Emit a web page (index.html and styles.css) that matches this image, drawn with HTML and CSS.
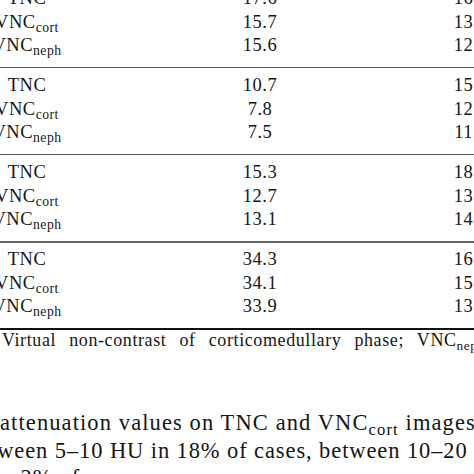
FILE: index.html
```html
<!DOCTYPE html>
<html>
<head>
<meta charset="utf-8">
<link rel="stylesheet" href="styles.css">
</head>
<body>
<div class="table">
  <div class="group">
    <div class="row"><span>TNC</span><span>17.6</span><span>16.4</span></div>
    <div class="row"><span>VNC<span class="sub">cort</span></span><span>15.7</span><span>13.9</span></div>
    <div class="row"><span>VNC<span class="sub">neph</span></span><span>15.6</span><span>12.8</span></div>
  </div>
  <div class="group">
    <div class="row"><span>TNC</span><span>10.7</span><span>15.2</span></div>
    <div class="row"><span>VNC<span class="sub">cort</span></span><span>7.8</span><span>12.6</span></div>
    <div class="row"><span>VNC<span class="sub">neph</span></span><span>7.5</span><span>11.9</span></div>
  </div>
  <div class="group">
    <div class="row"><span>TNC</span><span>15.3</span><span>18.1</span></div>
    <div class="row"><span>VNC<span class="sub">cort</span></span><span>12.7</span><span>13.8</span></div>
    <div class="row"><span>VNC<span class="sub">neph</span></span><span>13.1</span><span>14.5</span></div>
  </div>
  <div class="group group-thick">
    <div class="row"><span>TNC</span><span>34.3</span><span>16.7</span></div>
    <div class="row"><span>VNC<span class="sub">cort</span></span><span>34.1</span><span>15.3</span></div>
    <div class="row"><span>VNC<span class="sub">neph</span></span><span>33.9</span><span>13.6</span></div>
  </div>
</div>
<p class="footnote">Virtual non-contrast of corticomedullary phase; VNC<span class="sub">neph</span>, virtual</p>
<div class="body-text">
  <p class="line l1">attenuation values on TNC and VNC<span class="sub">cort</span> images were</p>
  <p class="line l2">between 5–10 HU in 18% of cases, between 10–20 HU in</p>
  <p class="line l3">in 2% of cases.</p>
</div>
</body>
</html>
```

FILE: styles.css
```css
html, body {
  margin: 0;
  padding: 0;
  background: #ffffff;
}
body {
  width: 474px;
  height: 474px;
  overflow: hidden;
  color: #151515;
  font-family: "Liberation Serif", "Times New Roman", serif;
}
.table {
  margin-left: -20px;
  margin-top: -20px;
  width: 516px;
  border-bottom: 2px solid #111;
}
.group {
  border-top: 1px solid #5a5a5a;
  padding: 6px 0 9.5px;
}
.group-thick {
  border-top: 2px solid #666;
  padding-top: 5px;
}
.row {
  display: grid;
  grid-template-columns: 94px 372px 50px;
  height: 23.5px;
  line-height: 23.5px;
  font-size: 18.5px;
  letter-spacing: 0.5px;
  white-space: nowrap;
}
.row > span {
  text-align: center;
}
.sub {
  font-size: 0.74em;
  vertical-align: -0.28em;
  line-height: 0;
}
.footnote {
  margin: 0 0 0 2px;
  font-size: 18px;
  line-height: 20px;
  letter-spacing: 0.6px;
  word-spacing: 8px;
  white-space: nowrap;
}
.body-text {
  margin-top: 59px;
  font-size: 22.5px;
  line-height: 27.5px;
  letter-spacing: 1.1px;
  white-space: nowrap;
}
.line {
  margin: 0;
}
.l1 {
  text-indent: 0;
}
.l2 {
  text-indent: -33px;
  letter-spacing: 0.9px;
}
.l3 {
  text-indent: -6px;
}
```
